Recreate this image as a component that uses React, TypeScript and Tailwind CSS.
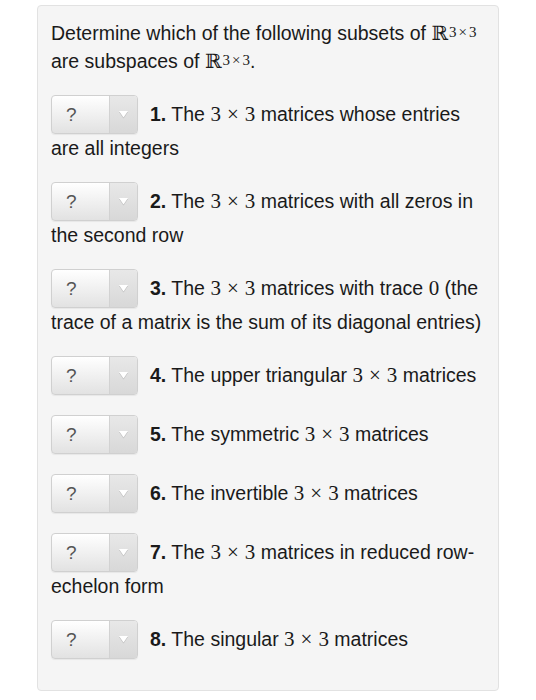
import React from "react";

const serif = '"Liberation Serif", "DejaVu Serif", serif';

const M = ({ children }: { children: React.ReactNode }) => (
  <span className="text-[21px]" style={{ fontFamily: serif }}>
    {children}
  </span>
);

const R = () => (
  <span className="text-[20px]" style={{ fontFamily: '"DejaVu Serif", serif' }}>
    ℝ
  </span>
);

const Sup = () => (
  <sup className="text-[15px] relative top-[-3px] ml-[1px]" style={{ fontFamily: serif }}>
    3<span className="mx-[2px]">×</span>3
  </sup>
);

const Sel = () => (
  <span className="inline-flex align-baseline w-[87px] h-[39px] rounded-[4px] border border-[#d0d0d0] bg-gradient-to-b from-[#ffffff] to-[#e2e2e2] mr-[12px] overflow-hidden shadow-[0_1px_1px_rgba(0,0,0,0.06)]">
    <span className="flex-1 flex items-center pl-[14px] text-[19px] text-[#555]">?</span>
    <span className="w-[28px] flex items-center justify-center border-l border-[#d2d2d2] bg-gradient-to-b from-[#e8e8e8] to-[#d8d8d8]">
      <svg width="11" height="9" viewBox="0 0 11 9">
        <polygon points="1,2 10,2 5.5,8.5" fill="#bdbdbd" />
        <polygon points="1,1 10,1 5.5,7.5" fill="#ffffff" />
      </svg>
    </span>
  </span>
);

const X = () => (
  <M>
    3<span className="mx-[6px]">×</span>3
  </M>
);

const items: React.ReactNode[] = [
  <>The <X /> matrices whose entries are all integers</>,
  <>The <X /> matrices with all zeros in the second row</>,
  <>The <X /> matrices with trace <M>0</M> (the trace of a matrix is the sum of its diagonal entries)</>,
  <>The upper triangular <X /> matrices</>,
  <>The symmetric <X /> matrices</>,
  <>The invertible <X /> matrices</>,
  <>The <X /> matrices in reduced row-echelon form</>,
  <>The singular <X /> matrices</>,
];

export default function App() {
  return (
    <div className="w-[536px] h-[700px] bg-white pt-[5px] pl-[37px]" style={{ fontFamily: '"Liberation Sans", Arial, sans-serif' }}>
      <div className="w-[462px] h-[686px] bg-[#f5f5f5] border border-[#e2e2e2] rounded-[4px] pt-[13px] pl-[13px] pr-[12px] text-[19.5px] leading-[28px] text-[#1a1a1a]">
        <p>
          Determine which of the following subsets of <R />
          <Sup /> are subspaces of <R />
          <Sup />.
        </p>
        {items.map((t, i) => (
          <div key={i} className="mt-[20px]">
            <Sel />
            <b>{i + 1}.</b> {t}
          </div>
        ))}
      </div>
    </div>
  );
}
